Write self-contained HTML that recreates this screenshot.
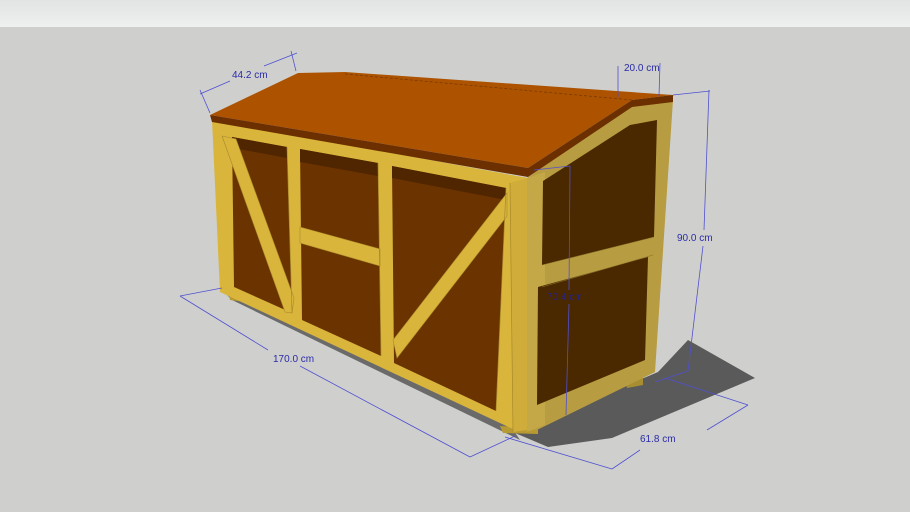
<!DOCTYPE html>
<html><head><meta charset="utf-8"><style>
html,body{margin:0;padding:0;width:910px;height:512px;overflow:hidden;background:#cfd0ce}
svg{display:block}
text{font-family:"Liberation Sans",sans-serif;font-size:10px;fill:#2a2aa8}
</style></head><body>
<svg width="910" height="512" viewBox="0 0 910 512" xmlns="http://www.w3.org/2000/svg">
<defs>
<linearGradient id="tb" x1="0" y1="0" x2="0" y2="1"><stop offset="0" stop-color="#e2e4e4"/><stop offset="1" stop-color="#eef0ef"/></linearGradient>
</defs>
<rect x="0" y="0" width="910" height="27" fill="url(#tb)"/>
<rect x="0" y="27" width="910" height="485" fill="#cfd0ce"/>
<!-- ground shadow -->
<polygon points="515,433 548,447 612,438 755,378 688,340 658,372" fill="#5a5a5a"/>
<polygon points="222,290 512,428 520,440 232,300" fill="#6a6a6a"/>
<!-- feet -->
<polygon points="228,290 246,292 246,302 230,300" fill="#b89a32"/>
<polygon points="500,426 538,428 538,434 503,433" fill="#b89a32"/>
<polygon points="625,378 643,372 643,385 627,388" fill="#a88e30"/>
<!-- front frame -->
<polygon points="212,120 528,178 515,430 220,292" fill="#d9b53c"/>
<!-- front panels -->
<polygon points="232,137 287,147 292,313 234,287" fill="#6b3300"/>
<polygon points="300,149 378,163 381,356 302,320" fill="#6b3300"/>
<polygon points="392,166 506,188 496,411 394,363" fill="#6b3300"/>
<polygon points="232,137 287,147 287,158 233,148" fill="#4f2600"/>
<polygon points="300,149 378,163 378,176 300,162" fill="#4f2600"/>
<polygon points="392,166 506,188 506,200 392,178" fill="#4f2600"/>
<!-- diagonals / rail -->
<polygon points="222,136 236,139 294,298 292,313 285,312" fill="#d9b53c" stroke="#a8892a" stroke-width="0.6"/>
<polygon points="300,227 380,249 380,266 300,243" fill="#d9b53c" stroke="#a8892a" stroke-width="0.6"/>
<polygon points="393,340 507,193 507,216 397,358" fill="#d9b53c" stroke="#a8892a" stroke-width="0.6"/>
<!-- post edges -->
<line x1="287" y1="147" x2="292" y2="313" stroke="#a8892a" stroke-width="0.7"/>
<line x1="378" y1="163" x2="381" y2="356" stroke="#a8892a" stroke-width="0.7"/>
<line x1="506" y1="188" x2="496" y2="411" stroke="#a8892a" stroke-width="0.7"/>
<!-- right corner post side -->
<polygon points="510,183 528,178 527,430 513,432" fill="#d0ad3a"/>
<line x1="510" y1="183" x2="513" y2="432" stroke="#a8892a" stroke-width="0.7"/>
<!-- side face -->
<polygon points="527,178 632,104 673,100 655,372 537,430 527,430" fill="#b79c42"/>
<polygon points="527,178 545,172 545,425 527,432" fill="#c4a746"/>
<polygon points="543,181 630,125 657,120 654,237 542,265" fill="#4a2800"/>
<polygon points="538,287 648,257 645,360 537,405" fill="#4a2800"/>
<line x1="542" y1="265" x2="654" y2="237" stroke="#8a742c" stroke-width="0.6"/>
<line x1="542" y1="287" x2="653" y2="255" stroke="#8a742c" stroke-width="0.6"/>
<!-- roof -->
<polygon points="210,115 298,73 345,72 673,95 632,100 528,168" fill="#ad5300"/>
<polygon points="210,115 528,168 528,177 212,122" fill="#6b2f00"/>
<polygon points="528,168 632,100 673,95 673,102 632,107 528,177" fill="#6b2f00"/>
<line x1="345" y1="74" x2="632" y2="100" stroke="#7a3a00" stroke-width="0.8" stroke-dasharray="3,2"/>
<!-- dimensions -->
<g stroke="#5050d0" stroke-width="0.8" fill="none">
<line x1="200" y1="94" x2="230" y2="81"/><line x1="264" y1="66" x2="297" y2="53"/>
<line x1="200" y1="90" x2="210" y2="113"/><line x1="291" y1="51" x2="296" y2="71"/>
<line x1="618" y1="66" x2="618" y2="97"/><line x1="660" y1="63" x2="659" y2="96"/>
<line x1="673" y1="95" x2="710" y2="91"/>
<line x1="709" y1="90" x2="704" y2="230"/><line x1="703" y1="246" x2="688" y2="371"/>
<line x1="655" y1="382" x2="688" y2="371"/>
<line x1="570" y1="166" x2="569" y2="290"/><line x1="569" y1="304" x2="566" y2="415"/>
<line x1="534" y1="170" x2="570" y2="166"/>
<line x1="180" y1="296" x2="222" y2="288"/>
<line x1="180" y1="296" x2="268" y2="350"/><line x1="300" y1="366" x2="470" y2="457"/>
<line x1="470" y1="457" x2="515" y2="436"/>
<line x1="665" y1="378" x2="748" y2="405"/>
<line x1="748" y1="405" x2="707" y2="430"/><line x1="640" y1="450" x2="612" y2="469"/>
<line x1="505" y1="437" x2="612" y2="469"/>
</g>
<text x="232" y="78">44.2 cm</text>
<text x="624" y="71">20.0 cm</text>
<text x="677" y="241">90.0 cm</text>
<text x="547" y="300" style="fill:#22228a">70.4 cm</text>
<text x="273" y="362">170.0 cm</text>
<text x="640" y="442">61.8 cm</text>
</svg>
</body></html>
